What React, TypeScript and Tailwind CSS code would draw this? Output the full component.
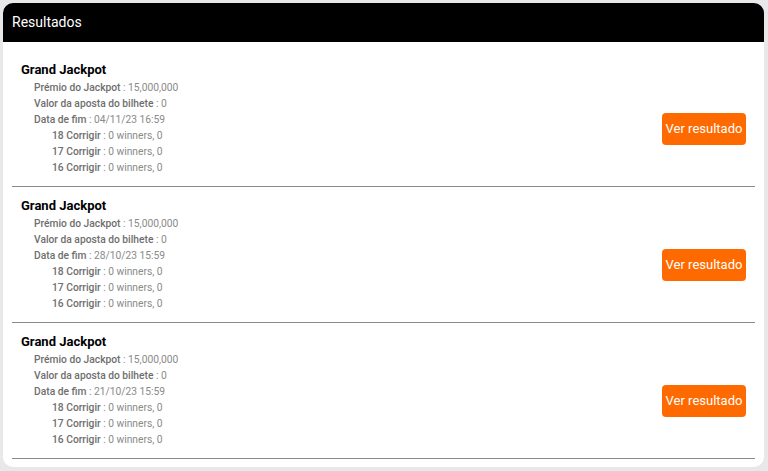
import React from 'react';

interface Result {
  date: string;
}

const results: Result[] = [
  { date: '04/11/23 16:59' },
  { date: '28/10/23 15:59' },
  { date: '21/10/23 15:59' },
];

const Line = ({ label, value, indent }: { label: string; value: string; indent?: boolean }) => (
  <div className={`h-4 leading-4 text-[10.25px] ${indent ? 'pl-[31px]' : 'pl-[13px]'}`}>
    <span className="font-medium text-[#6e6e6e]">{label}</span>
    <span className="text-[#8a8a8a]"> : {value}</span>
  </div>
);

export default function App() {
  return (
    <div className="w-[768px] h-[471px] bg-[#e8e8ea] p-[3px] font-['Roboto',sans-serif]">
      <div className="h-[464px] w-[761px] bg-white rounded-[10px] overflow-hidden flex flex-col">
        <div className="h-[39px] bg-black text-white text-[14px] flex items-center px-[9px]">Resultados</div>
        <div className="pt-[9px] pl-[9px] pr-[9px]">
          {results.map((r, i) => (
            <div key={i} className="flex items-center justify-between border-b border-[#8a8a8a] pt-[9px] pb-[10px] pl-[9px] pr-[9px]">
              <div>
                <div className="h-5 leading-5 text-[13px] font-bold text-black">Grand Jackpot</div>
                <Line label="Prémio do Jackpot" value="15,000,000" />
                <Line label="Valor da aposta do bilhete" value="0" />
                <Line label="Data de fim" value={r.date} />
                <Line label="18 Corrigir" value="0 winners, 0" indent />
                <Line label="17 Corrigir" value="0 winners, 0" indent />
                <Line label="16 Corrigir" value="0 winners, 0" indent />
              </div>
              <button className="mt-[22px] h-8 w-[84px] rounded-[4px] bg-[#ff6a00] text-white text-[13px]">
                Ver resultado
              </button>
            </div>
          ))}
        </div>
      </div>
    </div>
  );
}
